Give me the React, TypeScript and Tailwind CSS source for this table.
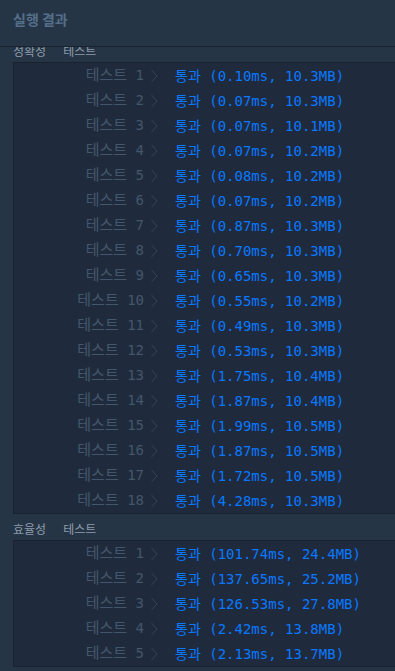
const mono = "font-['DejaVu_Sans_Mono','Noto_Sans_CJK_KR',monospace]";

const accuracy = [
  "0.10ms, 10.3MB",
  "0.07ms, 10.3MB",
  "0.07ms, 10.1MB",
  "0.07ms, 10.2MB",
  "0.08ms, 10.2MB",
  "0.07ms, 10.2MB",
  "0.87ms, 10.3MB",
  "0.70ms, 10.3MB",
  "0.65ms, 10.3MB",
  "0.55ms, 10.2MB",
  "0.49ms, 10.3MB",
  "0.53ms, 10.3MB",
  "1.75ms, 10.4MB",
  "1.87ms, 10.4MB",
  "1.99ms, 10.5MB",
  "1.87ms, 10.5MB",
  "1.72ms, 10.5MB",
  "4.28ms, 10.3MB",
];

const efficiency = [
  "101.74ms, 24.4MB",
  "137.65ms, 25.2MB",
  "126.53ms, 27.8MB",
  "2.42ms, 13.8MB",
  "2.13ms, 13.7MB",
];

function Chevron() {
  return (
    <svg width="7" height="14" viewBox="0 0 7 14" className="ml-[7px] shrink-0">
      <polyline points="0.5,1 6,7 0.5,13" fill="none" stroke="#33445a" strokeWidth="1" />
    </svg>
  );
}

function ResultRow({ n, result }: { n: number; result: string }) {
  return (
    <div className={`flex h-[25px] items-center text-[14px] leading-none ${mono}`}>
      <span className="w-[130px] text-right whitespace-pre text-[#44566b]">
        <span className="text-[15px]">테스트</span> {n}
      </span>
      <Chevron />
      <span className="ml-[17px] whitespace-pre text-[#0a78ff]">통과 ({result})</span>
    </div>
  );
}

function Section({ name, rows }: { name: string; rows: string[] }) {
  return (
    <div>
      {/* section label */}
      <div className="flex h-[26px] items-center pt-[3px] pl-[13px] font-['Noto_Sans_CJK_KR',sans-serif] text-[12px] text-[#8d9cab]">
        <span>{name}</span>
        <span className="ml-[17px]">테스트</span>
      </div>
      {/* result list, wider than the viewport */}
      <div className="ml-[13px] w-[400px] border-y border-l border-[#18222f] bg-[#1f2b3c]">
        {rows.map((r, i) => (
          <ResultRow key={i} n={i + 1} result={r} />
        ))}
      </div>
    </div>
  );
}

export default function App() {
  return (
    <div className="flex h-[671px] w-[395px] flex-col overflow-hidden bg-[#263546]">
      <header className="h-[47px] shrink-0 border-b border-[#19232f] pt-[11px] pl-[13px]">
        <h1 className="font-['Noto_Sans_CJK_KR',sans-serif] text-[14px] leading-[16px] font-bold text-[#546e8a]">
          실행 결과
        </h1>
      </header>

      {/* scrolled output */}
      <div className="min-h-0 flex-1 overflow-hidden">
        <div className="-mt-[11px]">
          <Section name="정확성" rows={accuracy} />
          <Section name="효율성" rows={efficiency} />
        </div>
      </div>
    </div>
  );
}
